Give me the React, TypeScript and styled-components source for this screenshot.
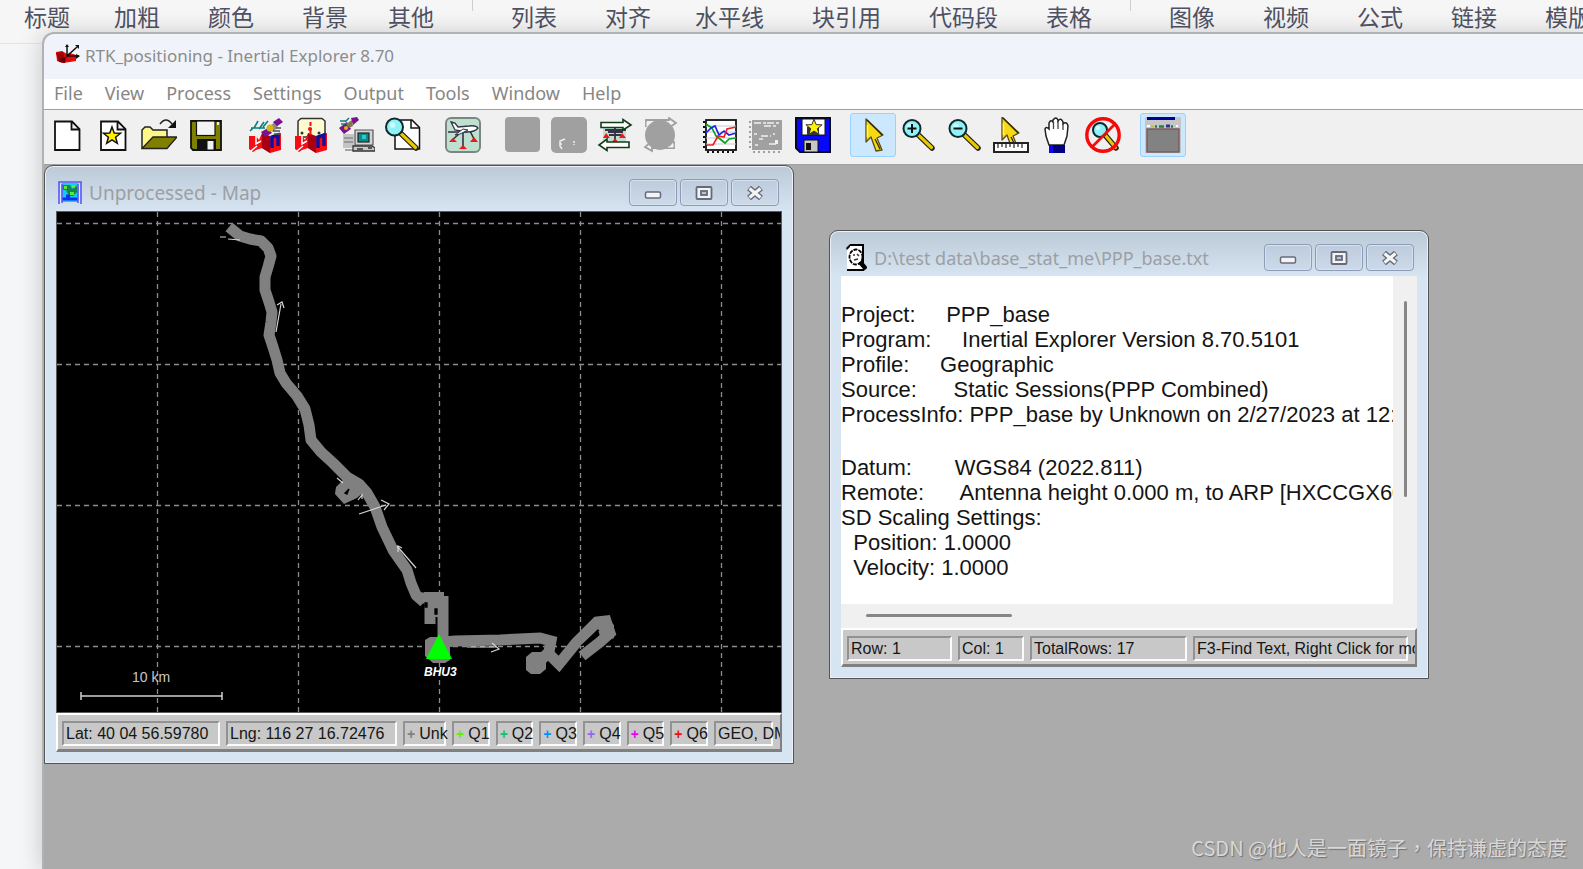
import React from "react";
import styled, { createGlobalStyle } from "styled-components";

const ui = `"Noto Sans", "Noto Sans CJK SC", sans-serif`;
const arial = `"Liberation Sans", Arial, sans-serif`;

const Global = createGlobalStyle`
  * { box-sizing: border-box; }
  body { margin: 0; background: #f5f6f8; overflow: hidden; }
  button { font: inherit; color: inherit; border: 0; padding: 0; background: none; }
`;

/* ---------- editor page behind ---------- */
const Page = styled.div`
  position: relative;
  min-height: 100vh;
  overflow: hidden;
  font-family: ${ui};
`;
const EditorBar = styled.nav`
  display: flex;
  align-items: flex-start;
  height: 44px;
  padding-left: 24px;
  border-bottom: 1px solid #e2e3e5;
  background: #f6f6f6;
  white-space: nowrap;
`;
const EditorItem = styled.button<{ $gap?: number }>`
  flex: none;
  margin-right: ${(p) => p.$gap ?? 48}px;
  font-family: "Noto Sans CJK SC", sans-serif;
  font-size: 23px;
  line-height: 32px;
  color: #4f5264;
`;
const EditorRule = styled.span`
  flex: none;
  width: 1px;
  height: 11px;
  margin: 0 38px 0 -10px;
  background: #cfcfcf;
`;

/* ---------- application window ---------- */
const AppWindow = styled.main`
  position: absolute;
  inset: 32px 0 0 42px;
  display: flex;
  flex-direction: column;
  border: solid #b2b2b2;
  border-width: 2px 0 0 2px;
  border-top-left-radius: 12px;
  overflow: hidden;
  background: #ababab;
  box-shadow: 0 2px 24px rgba(0, 0, 0, 0.2);
`;
const TitleBar = styled.header`
  display: flex;
  align-items: center;
  gap: 5px;
  height: 45px;
  padding: 0 0 3px 12px;
  background: #f0f3f9;
  color: #8c8c8c;
  font-size: 17px;
`;
const MenuBar = styled.nav`
  display: flex;
  align-items: center;
  gap: 22px;
  height: 31px;
  padding: 0 10px 2px;
  background: #fff;
  border-bottom: 1px solid #a0a0a0;
  color: #868686;
  font-size: 18px;
  line-height: 28px;
`;
const ToolBar = styled.div`
  display: flex;
  gap: 14px;
  height: 55px;
  padding-top: 3px;
  background: #f0f0f0;
  border-bottom: 1px solid #a0a0a0;
`;
const ToolGroup = styled.div`
  display: flex;
`;
const Tool = styled.button<{ $on?: boolean }>`
  display: grid;
  place-items: center;
  width: 46px;
  height: 44px;
  border: 1px solid ${(p) => (p.$on ? "#99d1ff" : "transparent")};
  border-radius: 3px;
  background: ${(p) => (p.$on ? "#cce8ff" : "transparent")};
`;
const Workspace = styled.section`
  position: relative;
  flex: 1;
`;

/* ---------- child windows ---------- */
const Child = styled.article<{ $x: number; $y: number; $w: number; $h: number }>`
  position: absolute;
  left: ${(p) => p.$x}px;
  top: ${(p) => p.$y}px;
  width: ${(p) => p.$w}px;
  height: ${(p) => p.$h}px;
  display: flex;
  flex-direction: column;
  padding: 0 11px 11px;
  border: 1px solid #545454;
  border-radius: 9px 9px 0 0;
  box-shadow: inset 0 0 0 1px #eaf1f8;
  background: linear-gradient(#bccad8, #d7e4f1 46px);
`;
const ChildBar = styled.header`
  display: flex;
  align-items: center;
  height: 45px;
  flex: none;
  padding: 8px 3px 0 2px;
  color: #9c9fa3;
`;
const ChildTitle = styled.h2<{ $large?: boolean }>`
  flex: 1;
  margin: 0 0 0 7px;
  font-weight: 400;
  font-size: ${(p) => (p.$large ? 19 : 18)}px;
  line-height: 26px;
  white-space: nowrap;
`;
const Captions = styled.div`
  display: flex;
  gap: 3px;
`;
const Caption = styled.button`
  display: grid;
  place-items: center;
  width: 48px;
  height: 27px;
  border: 1px solid #8c9bb6;
  border-radius: 4px;
  background: linear-gradient(#bdcbdc, #cddaea);
  box-shadow: inset 0 0 0 1px #d7e2f0;
`;
const MapView = styled.svg`
  display: block;
  flex: 1;
  width: 100%;
  min-height: 0;
  background: #000;
  border: 1px solid #5c5c5c;
`;
const Status = styled.footer<{ $cols: string }>`
  display: grid;
  grid-template-columns: ${(p) => p.$cols};
  gap: 6px;
  flex: none;
  height: 39px;
  padding: 6px 7px 6px 4px;
  overflow: hidden;
  background: #c8c8c8;
  border: solid;
  border-width: 2px 2px 3px 2px;
  border-color: #fff #808080 #808080 #fff;
  font: 16px/22px ${arial};
  color: #161616;
`;
const Cell = styled.span`
  min-width: 0;
  height: 25px;
  padding-left: 2px;
  border: solid;
  border-width: 2px;
  border-color: #929292 #fbfbfb #fbfbfb #929292;
  white-space: nowrap;
`;
const Mark = styled.span<{ $c: string }>`
  margin-right: 4px;
  font-size: 14px;
  font-weight: 700;
  color: ${(p) => p.$c};
`;
const Doc = styled.div`
  flex: 1;
  min-height: 0;
  display: grid;
  grid-template-columns: 1fr 24px;
  grid-template-rows: 1fr 24px;
  background: #f0f0f0;
`;
const DocText = styled.div`
  min-width: 0;
  overflow: hidden;
  padding-top: 26px;
  background: #fff;
  color: #141414;
  font: 22px/25px ${arial};
`;
const Block = styled.p`
  margin: 0 0 28px;
  white-space: pre;
`;
const VThumb = styled.div`
  width: 3px;
  height: 196px;
  margin: 25px 0 0 11px;
  background: #868686;
  border-radius: 2px;
`;
const HThumb = styled.div`
  width: 146px;
  height: 3px;
  margin: 10px 0 0 25px;
  background: #868686;
  border-radius: 2px;
`;
const Watermark = styled.small`
  position: absolute;
  right: 16px;
  bottom: 7px;
  font: 20px/28px "Noto Sans CJK TC", sans-serif;
  color: #d8d8d8;
  text-shadow: 1px 1px 1px #707070;
`;

/* ---------- icons ---------- */
const Svg = ({ children }: { children: React.ReactNode }) => (
  <svg width="36" height="36" viewBox="0 0 36 36" aria-hidden="true">
    {children}
  </svg>
);
const starPoints = (cx: number, cy: number, r: number) =>
  Array.from({ length: 10 }, (_, i) => {
    const a = (Math.PI / 5) * i - Math.PI / 2;
    const k = i % 2 ? r * 0.42 : r;
    return `${cx + k * Math.cos(a)},${cy + k * Math.sin(a)}`;
  }).join(" ");

const Page1 = () => (
  <path d="M6 4.5H23L30.5 12V33H6zM22.500 4.500V12.500H30.500" fill="#fff" stroke="#111" strokeWidth="1.800" />
);
const RedBox = () => (
  <>
    <path d="M2 32V19H9L12 23L15 16L23 20V36L15 31L9 33L6 35z" fill="#f80c14" />
    <path d="M15 16L23 19V36L15 31z" fill="#a80010" />
    <path d="M23 20L34 16V33L23 36z" fill="#f80c14" />
    <path d="M25 31V20L31 18V29" fill="none" stroke="#1010a0" strokeWidth="3.500" />
    <path d="M9 19V27L14 24M4 34L10 29" fill="none" stroke="#fff" strokeWidth="1.500" />
  </>
);
const Lens = ({ x = 12, y = 12, r = 8.5, sign = "" }) => (
  <>
    <path d={`M${x + r * 0.7} ${y + r * 0.7}L31 31`} stroke="#222" strokeWidth="5.500" strokeLinecap="round" />
    <path d={`M${x + r * 0.8} ${y + r * 0.8}L30.500 30.500`} stroke="#e8c800" strokeWidth="3.200" strokeLinecap="round" />
    <circle cx={x} cy={y} r={r} fill="#8ff2f8" stroke="#10282c" strokeWidth="2" />
    <circle cx={x - 2} cy={y - 2} r={r / 3} fill="#c8fcff" />
    {sign && <path d={sign} stroke="#111" strokeWidth="2" />}
  </>
);
const Pointer = () => (
  <>
    <path d="M11 2V25L16 20L21 34L27 33L22 21L28 18z" fill="#f8d810" stroke="#5a4a10" strokeWidth="1.300" strokeLinejoin="round" />
    <path d="M20 22L25 32M12 3L27 18" stroke="#222" strokeWidth="1.200" fill="none" />
    <path d="M12.500 8V20" stroke="#fff28a" strokeWidth="1.500" />
  </>
);

const NewIcon = () => <Svg><Page1 /></Svg>;
const StarPageIcon = () => (
  <Svg><Page1 /><polygon points={starPoints(17, 19, 9)} fill="#fff200" stroke="#111" strokeWidth="1.500" /></Svg>
);
const OpenIcon = () => (
  <Svg>
    <path d="M1 31V13L4 10H9L12 13H26V20" fill="#fff68a" stroke="#222" strokeWidth="1.500" />
    <path d="M1 31.500L12 20H36L26 31.500z" fill="#808000" stroke="#222" strokeWidth="1.300" />
    <path d="M19 7Q25 -1 31 7" fill="none" stroke="#222" strokeWidth="1.600" />
    <path d="M35 3V11H27z" fill="#111" />
  </Svg>
);
const SaveIcon = () => (
  <Svg>
    <path d="M4 4H34V33H6L4 31z" fill="#808000" stroke="#111" strokeWidth="1.800" />
    <rect x="9.500" y="4" width="18.500" height="14.500" fill="#f4f4f4" stroke="#111" strokeWidth="1.200" />
    <rect x="10" y="22" width="19" height="11" fill="#111" />
    <rect x="20.500" y="24" width="6" height="8.500" fill="#f0f0f0" />
    <rect x="30" y="5" width="2" height="3" fill="#eee" />
  </Svg>
);
const SatBoxIcon = () => (
  <Svg>
    <RedBox />
    <path d="M4 11H18M7 11L11 4M12 12L17 5M16 10L21 4M3 14L6 11" stroke="#0a8080" strokeWidth="1.600" />
    <path d="M14 15L21 11L25 16L18 20zM26 5L32 1L36 5L29 10z" fill="#7c1090" />
    <path d="M21 10L27 6L31 10L26 15z" fill="#8c8c88" /><circle cx="23" cy="11" r="3.500" fill="#d8b810" />
    <path d="M26 14H33M27 17H34M29 11H34" stroke="#555" strokeWidth="1.300" />
  </Svg>
);
const CardBoxIcon = () => (
  <Svg>
    <path d="M5 20V4L8 1.500H29L32 4V20z" fill="#fffbd0" stroke="#333" strokeWidth="1.500" />
    <RedBox />
    <path d="M17.500 5V18" stroke="#f01010" strokeWidth="2" strokeDasharray="4 2 8" /><circle cx="17" cy="12" r="2" fill="#f01010" />
    <circle cx="9" cy="16" r="1.500" fill="#333" /><circle cx="26" cy="16" r="1.500" fill="#333" />
  </Svg>
);
const ComputerIcon = () => (
  <Svg>
    <path d="M4 17H15V31H4z" fill="#c4c4c4" /><path d="M5 21H14M5 25H14M6 33H15" stroke="#8a8a8a" strokeWidth="1.500" />
    <path d="M0 11L8 5L12 12L5 17zM12 1L18 0L20 3L14 8z" fill="#7c1090" />
    <path d="M7 7L13 3L14 9L10 11z" fill="#807850" /><circle cx="7" cy="11" r="2" fill="#d8b810" />
    <path d="M1 4H7M2 7H6M10 1L6 5" stroke="#0a8080" strokeWidth="1.500" />
    <path d="M16 13H34V28H16z" fill="#d4d4d4" stroke="#555" strokeWidth="1.200" />
    <rect x="19" y="16" width="11" height="9" fill="#0b8a8a" stroke="#222" strokeWidth="1.200" /><rect x="23" y="18" width="4" height="4" fill="#30c8c8" />
    <path d="M14 29H33L36 31V34H14z" fill="#c8c8c8" stroke="#333" strokeWidth="1.300" /><path d="M18 32H24M29 31H33" stroke="#333" strokeWidth="1.300" />
  </Svg>
);
const ViewIcon = () => (
  <Svg>
    <path d="M10 3H27L34.500 10.500V32H10z" fill="#fff" stroke="#111" strokeWidth="1.500" /><path d="M26 3V11H34" fill="none" stroke="#111" strokeWidth="1.500" />
    <Lens x={9.500} y={10} r={8.500} />
  </Svg>
);
const PlaneArt = () => (
  <>
    <path d="M3 15H22M14 17L6 24M18 16V30M25 14L30 24" stroke="#334" strokeWidth="1.600" fill="none" />
    <path d="M6 5L10 6L13 10L24 9Q31 8 33 11Q30 15 22 15L10 13z" fill="#fff" stroke="#334" strokeWidth="1.300" />
    <path d="M18 12L10 18L15 17L23 13z" fill="#fff" stroke="#334" strokeWidth="1" />
    <path d="M8 21L12 25H4zM18 28L22 32H14zM29 20L33 25H25z" fill="#f01818" />
  </>
);
const PlaneIcon = () => (
  <Svg><rect x="1" y="1" width="34" height="34" rx="5" fill="#bfe0d0" stroke="#7a8780" strokeWidth="2" /><PlaneArt /></Svg>
);
const GrayBlockIcon = () => <Svg><rect x="0" y="0" width="35" height="35" rx="4" fill="#a0a0a0" /></Svg>;
const GrayBlock2Icon = () => (
  <Svg><rect x="0" y="0" width="36" height="36" rx="5" fill="#a0a0a0" /><path d="M14 22L9 24V29L11 32M9 27H11M23 24V26M23 27V28" stroke="#eee" strokeWidth="1.500" fill="none" /></Svg>
);
const SwapArrows = ({ fill, stroke }: { fill: string; stroke: string }) => (
  <path d="M4 5.500H26V2.500L34 8L26 13V10.500H4zM32 25H10V22L2 28L10 33.500V30.500H32z" fill={fill} stroke={stroke} strokeWidth="1.600" />
);
const SwapIcon = () => (
  <Svg>
    <rect x="6" y="9" width="23" height="18" fill="#bfe0d0" /><path d="M8 13H29M18 11V26M11 15H26M12 18L24 18" stroke="#334" strokeWidth="1.800" />
    <path d="M9 16L13 21H6zM25 16L29 21H22zM18 21L21 25H15z" fill="#f01818" />
    <SwapArrows fill="#fff" stroke="#123c18" />
  </Svg>
);
const GraySwapIcon = () => (
  <Svg>
    <circle cx="17" cy="18" r="15" fill="#a0a0a0" />
    <path d="M3 10V3H26V1L33 6L27 10M31 24V31H9V34L2 30L8 25" fill="none" stroke="#a0a0a0" strokeWidth="1.800" />
    <path d="M4 9V5H9M30 27V30H25" stroke="#f0f0f0" fill="none" />
  </Svg>
);
const ChartIcon = () => (
  <Svg>
    <rect x="3" y="3" width="30" height="30" fill="#fff" stroke="#111" strokeWidth="1.800" />
    <path d="M3 9H33M3 15H33M3 21H33M3 27H33" stroke="#c8c8c8" />
    <path d="M3 7L9 11L13 19L17 22L22 26L26 22L33 21" fill="none" stroke="#0aa020" strokeWidth="1.700" />
    <path d="M3 16L8 11L12 9L16 18L21 14L26 18L33 16" fill="none" stroke="#2020f0" strokeWidth="1.700" />
    <path d="M4 28H10L15 19L21 20L24 12L33 10" fill="none" stroke="#f02020" strokeWidth="1.700" />
    <path d="M1 4V34M4 35H33" stroke="#111" strokeWidth="2" strokeDasharray="2 3" />
  </Svg>
);
const GrayChartIcon = () => (
  <Svg>
    <rect x="3" y="3" width="30" height="30" fill="#a0a0a0" />
    <path d="M5 6H31M15 9H27M5 17H8M12 19H22M10 22H14M24 17H26M6 28H9M20 27H28" stroke="#f0f0f0" strokeWidth="1.500" strokeDasharray="7 2 3 1" />
    <rect x="26" y="23" width="3" height="4" fill="#f0f0f0" />
    <path d="M1 4V33M4 35H33" stroke="#a0a0a0" strokeWidth="2" strokeDasharray="2 3" />
  </Svg>
);
const StarSaveIcon = () => (
  <Svg>
    <path d="M1 1H35V35H5L1 31z" fill="#0808f8" stroke="#080820" strokeWidth="2" />
    <rect x="7" y="2" width="23" height="16" fill="#fff" stroke="#111" /><path d="M12 10H24V18H12z" fill="#333" />
    <polygon points={starPoints(19, 10.5, 8.5)} fill="#fff200" stroke="#333" />
    <rect x="9" y="23" width="14" height="12" fill="#c8c8c8" stroke="#111" /><rect x="11" y="26" width="5" height="7" fill="#111" />
  </Svg>
);
const PointerIcon = () => <Svg><Pointer /></Svg>;
const ZoomInIcon = () => <Svg><Lens x={11} y={11.500} sign="M6.500 11.500H15.500M11 7V16" /></Svg>;
const ZoomOutIcon = () => <Svg><Lens x={11} y={11.500} sign="M6.500 11.500H15.500" /></Svg>;
const MeasureIcon = () => (
  <Svg>
    <g transform="translate(-2 -2)"><Pointer /></g>
    <rect x="1" y="26" width="34" height="9" fill="#fff" stroke="#222" strokeWidth="2" />
    <path d="M5 27V31M9 27V30M13 27V31M17 27V30M21 27V31M25 27V30M29 27V31" stroke="#333" strokeWidth="1.300" />
  </Svg>
);
const HandIcon = () => (
  <Svg>
    <path d="M10 28L7 19L6 12Q7 9 10 12L10 6Q12 2 14 5V3Q17 -1 19 3V4Q22 0 24 5V7Q28 4 29 9L28 19L25 28z" fill="#fff" stroke="#222" strokeWidth="1.500" />
    <path d="M14.500 5V12M19 4V12M24 7V13" stroke="#444" strokeWidth="1.300" />
    <rect x="10" y="28" width="16" height="8" fill="#000080" /><rect x="10" y="28" width="4" height="8" fill="#0808e8" />
  </Svg>
);
const NoZoomIcon = () => (
  <Svg>
    <Lens x={15} y={13} r={7} />
    <circle cx="18" cy="18" r="16.200" fill="none" stroke="#f80808" strokeWidth="3.400" />
    <path d="M7 30L30 7" stroke="#f80808" strokeWidth="2.600" />
  </Svg>
);
const WindowIcon = () => (
  <Svg>
    <rect x="0" y="0" width="36" height="36" fill="#c6c6c8" /><rect x="2" y="0" width="28" height="3" fill="#000090" />
    <path d="M2 9H5M31 9H33" stroke="#fff" strokeWidth="2" /><path d="M6 9.500H9" stroke="#c8c020" strokeWidth="2" /><path d="M10 9.500H12M14 9.500H19M26 9.500H28" stroke="#208040" strokeWidth="2.500" /><path d="M21 9H25" stroke="#303090" strokeWidth="3" />
    <rect x="2" y="12" width="32" height="23" fill="#828282" stroke="#785c5c" strokeWidth="1.500" />
  </Svg>
);

const groups: [string, React.FC, boolean?][][] = [
  [["New", NewIcon], ["New wizard", StarPageIcon], ["Open", OpenIcon], ["Save", SaveIcon]],
  [["Process GNSS", SatBoxIcon], ["Process loosely coupled", CardBoxIcon], ["Process tightly coupled", ComputerIcon], ["View results", ViewIcon]],
  [["Map", PlaneIcon]],
  [["Forward", GrayBlockIcon], ["Reverse", GrayBlock2Icon], ["Combine", SwapIcon], ["Smooth", GraySwapIcon]],
  [["Plot", ChartIcon], ["Plot group", GrayChartIcon], ["Export", StarSaveIcon]],
  [["Select", PointerIcon, true], ["Zoom in", ZoomInIcon], ["Zoom out", ZoomOutIcon], ["Measure", MeasureIcon], ["Pan", HandIcon], ["Reset zoom", NoZoomIcon]],
  [["Windows", WindowIcon, true]],
];

const LogoIcon = () => (
  <svg width="24" height="22" viewBox="0 0 24 22" aria-hidden="true">
    <path d="M0 8L6 7L11 10L14 9L20 11V17L14 18L7 19L1 17z" fill="#e80808" />
    <path d="M0 9L7 8L9 15L3 18z" fill="#a00008" /><path d="M3 18L5 14L10 13L9 19z" fill="#600008" />
    <path d="M11 2V12L21 3M11 12H23" stroke="#111" strokeWidth="1.500" fill="none" />
    <path d="M11 0L13 3H9zM19 1H23V5zM20 10L24 12L20 15z" fill="#111" />
  </svg>
);
const MapIcon = () => (
  <svg width="24" height="24" viewBox="0 0 24 24" aria-hidden="true">
    <rect x="4" y="2" width="16" height="19" fill="#18c8f8" />
    <path d="M4 4H12L14 8L19 5V11L15 15H11L8 9H5zM10 3L17 14" fill="#108850" /><path d="M6 5H9V8H6zM14 4H17V7H14zM12 11H16V14H12z" fill="#60e830" />
    <path d="M4 18H20M8 15H12" stroke="#1030f0" strokeWidth="3" />
    <path d="M1 23V1H23V23M4 22V3M20 22V3" stroke="#5858f8" strokeWidth="1.600" fill="none" /><path d="M2.500 3V22M21.500 3V22" stroke="#e8e8ff" />
  </svg>
);
const FileIcon = () => (
  <svg width="24" height="28" viewBox="-3 0 24 28" aria-hidden="true">
    <path d="M4 1H17V26H1V4z" fill="#fff" /><path d="M4 1H17V20M1 26H18" stroke="#000" strokeWidth="2" fill="none" /><path d="M0 4L4 0V3L1 6z" fill="#111" />
    <ellipse cx="10" cy="13" rx="6.500" ry="7.500" fill="#fff" stroke="#000" strokeWidth="1.800" strokeDasharray="4 1" />
    <path d="M7 11H9M11 10L13 12M8 16L12 15" stroke="#333" strokeWidth="1.500" /><path d="M14 18L20 25" stroke="#000" strokeWidth="4.500" />
  </svg>
);

const WindowButtons = () => (
  <Captions>
    <Caption aria-label="Minimize">
      <svg width="18" height="14"><rect x="1.500" y="6" width="15" height="6" rx="1.500" fill="#f4f4f4" stroke="#666b7c" strokeWidth="1.500" /></svg>
    </Caption>
    <Caption aria-label="Maximize">
      <svg width="18" height="14"><rect x="1.500" y="1" width="15" height="12" rx="1" fill="#f4f4f4" stroke="#666b7c" strokeWidth="1.800" /><rect x="6" y="5" width="6" height="4" fill="#b8c4d6" stroke="#666b7c" strokeWidth="1.800" /></svg>
    </Caption>
    <Caption aria-label="Close">
      <svg width="18" height="14"><path d="M3 2L15 12M15 2L3 12" stroke="#666b7c" strokeWidth="6" /><path d="M3.500 2.400L14.500 11.600M14.500 2.400L3.500 11.600" stroke="#f4f4f4" strokeWidth="3.200" /></svg>
    </Caption>
  </Captions>
);

const quality: [string, string][] = [
  ["Unk", "#808080"], ["Q1", "#60f000"], ["Q2", "#10c070"], ["Q3", "#0090ff"], ["Q4", "#9068f0"], ["Q5", "#f000f0"], ["Q6", "#f01010"],
];

const TrackMap = () => (
  <MapView viewBox="57 212 724 500" preserveAspectRatio="xMinYMin slice" role="img" aria-label="Trajectory map">
    <g stroke="#8c8c8c" strokeWidth="1.300" strokeDasharray="5 4">
      {[157, 298, 439, 580, 721].map((x) => <path key={x} d={`M${x}.500 212V712`} />)}
      {[223, 364, 505, 646].map((y) => <path key={y} d={`M57 ${y}.500H782`} />)}
    </g>
    <g fill="none" stroke="#808080" strokeWidth="11">
      <path d="M229 227L240 236L250 239L261 241L268 248L271 256L268 267L265 277L265 290L269 302L272 312L271 322L269 335L273 347L277 360L280 373L286 383L297 396L305 409L309 425L311 440L321 452L333 463L347 477L359 484L367 493L375 507L382 527L393 550L407 570L411 583L416 595L424 602" strokeLinejoin="round" />
      <path d="M418 598H440M443 596V640M430 600V624M437 601V617" />
      <path d="M444 642L455 641L500 640L540 638L551 641L549 652L540 661M547 652L559 664L576 643L597 622L606 621L610 633L600 642L582 656" />
    </g>
    <path d="M345 478L336 487L335 494L344 504L357 498L366 490L358 480zM424 592H444V600H424zM425 640L430 637H450V660L445 663H433L425 656zM526 657L532 652H546V669L540 674H531L526 670zM594 618L605 616L614 625V638L607 641L600 636z" fill="#808080" />
    <path d="M345 493L349 489L347 494zM435 609H437V614H435zM425 603H427V607H425zM581 646L599 630" fill="#000" stroke="#000" strokeWidth="1.300" />
    <g fill="none" stroke="#d4d4d4" strokeWidth="1.200">
      <path d="M220 237H226M228 239L240 240M276 332L281 304M277 305L282 302L284 308M337 478L343 483M359 514L386 505M381 500L389 504L384 510M397 546L416 568M398 552V546L402 548M467 647H497M492 643L499 649L491 652M358 500L362 495V499" />
    </g>
    <path d="M439 634L452 659H426z" fill="#00ff00" />
    <text x="424" y="676" fill="#fff" fontFamily={arial} fontSize="12" fontStyle="italic" fontWeight="700">BHU3</text>
    <text x="132" y="682" fill="#c8c8c8" fontFamily={arial} fontSize="14">10 km</text>
    <path d="M81 692V700M222 692V700M81 696H222" stroke="#d0d0d0" strokeWidth="1.500" />
  </MapView>
);

export default function App() {
  return (
    <Page>
      <Global />
      <EditorBar>
        <EditorItem $gap={44}>标题</EditorItem><EditorItem>加粗</EditorItem><EditorItem>颜色</EditorItem>
        <EditorItem $gap={40}>背景</EditorItem><EditorItem>其他</EditorItem>
        <EditorRule />
        <EditorItem>列表</EditorItem><EditorItem $gap={44}>对齐</EditorItem><EditorItem>水平线</EditorItem>
        <EditorItem>块引用</EditorItem><EditorItem>代码段</EditorItem><EditorItem>表格</EditorItem>
        <EditorRule />
        <EditorItem>图像</EditorItem><EditorItem>视频</EditorItem><EditorItem>公式</EditorItem>
        <EditorItem>链接</EditorItem><EditorItem>模版</EditorItem>
      </EditorBar>

      <AppWindow>
        <TitleBar><LogoIcon />RTK_positioning - Inertial Explorer 8.70</TitleBar>
        <MenuBar>
          {["File", "View", "Process", "Settings", "Output", "Tools", "Window", "Help"].map((m) => <button key={m}>{m}</button>)}
        </MenuBar>
        <ToolBar>
          {groups.map((group, i) => (
            <ToolGroup key={i}>
              {group.map(([label, Icon, on]) => <Tool key={label} $on={on} aria-label={label}><Icon /></Tool>)}
            </ToolGroup>
          ))}
        </ToolBar>

        <Workspace>
          <Child $x={0} $y={0} $w={750} $h={599}>
            <ChildBar><MapIcon /><ChildTitle $large>Unprocessed - Map</ChildTitle><WindowButtons /></ChildBar>
            <TrackMap />
            <Status $cols="158px 171px 43px repeat(6, 1fr) 59px">
              <Cell>Lat: 40 04 56.59780</Cell>
              <Cell>Lng: 116 27 16.72476</Cell>
              {quality.map(([name, color]) => <Cell key={name}><Mark $c={color}>+</Mark>{name}</Cell>)}
              <Cell>GEO, DMS</Cell>
            </Status>
          </Child>

          <Child $x={785} $y={65} $w={600} $h={449}>
            <ChildBar><FileIcon /><ChildTitle>D:\test data\base_stat_me\PPP_base.txt</ChildTitle><WindowButtons /></ChildBar>
            <Doc>
              <DocText>
                <Block>{"Project:     PPP_base\nProgram:     Inertial Explorer Version 8.70.5101\nProfile:     Geographic\nSource:      Static Sessions(PPP Combined)\nProcessInfo: PPP_base by Unknown on 2/27/2023 at 12:"}</Block>
                <Block>{"Datum:       WGS84 (2022.811)\nRemote:      Antenna height 0.000 m, to ARP [HXCCGX601A]\nSD Scaling Settings:\n  Position: 1.0000\n  Velocity: 1.0000"}</Block>
              </DocText>
              <VThumb />
              <HThumb />
            </Doc>
            <Status $cols="105px 66px 157px 1fr">
              <Cell>Row: 1</Cell><Cell>Col: 1</Cell><Cell>TotalRows: 17</Cell>
              <Cell>F3-Find Text, Right Click for more</Cell>
            </Status>
          </Child>
        </Workspace>
      </AppWindow>
      <Watermark>CSDN @他人是一面镜子，保持谦虚的态度</Watermark>
    </Page>
  );
}
